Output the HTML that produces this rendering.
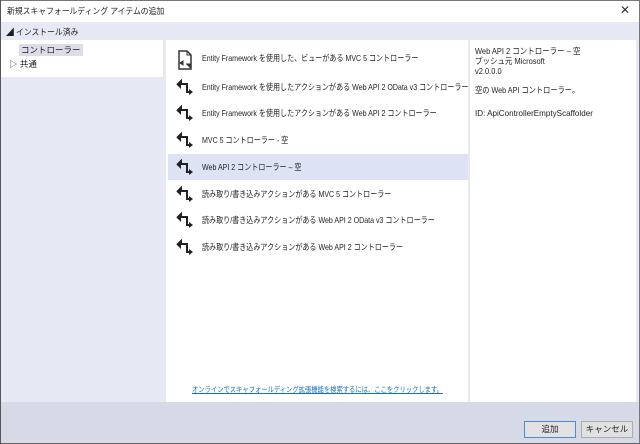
<!DOCTYPE html>
<html><head><meta charset="utf-8"><style>
*{margin:0;padding:0;box-sizing:border-box}
body{width:640px;height:444px;overflow:hidden;background:#e6e9f3;font-family:"Liberation Sans","Noto Sans CJK JP",sans-serif;font-size:9px;color:#1e1e1e;position:relative}
.abs{position:absolute}
.row{position:absolute;left:168px;width:300px;height:26px;display:flex;align-items:center;overflow:hidden}
.row span{position:absolute;left:34px;font-size:8.5px;white-space:nowrap;transform:scaleX(0.83);transform-origin:left center}
.row svg{position:absolute;left:8px;top:5px}
.sel{background:#dde2f4}
.btn{position:absolute;top:421px;height:17px;background:#e1e1e1;border:1px solid #adadad;font-size:8.5px;text-align:center;line-height:15px}
.sq{display:inline-block;white-space:nowrap;transform:scaleX(0.92);transform-origin:left top}
</style></head><body>
<div class="abs" style="left:0;top:0;width:640px;height:22px;background:#fff;border-left:1px solid #555;border-right:1px solid #777;border-top:1px solid #777"></div>
<div class="abs" style="left:7px;top:5px;font-size:8.5px"><span class="sq">新規スキャフォールディング アイテムの追加</span></div>
<div class="abs" style="left:620px;top:3px;font-size:12px;color:#333">✕</div>
<div class="abs" style="left:6px;top:26px;font-size:8.5px"><span class="sq">◢ インストール済み</span></div>
<div class="abs" style="left:0;top:40px;width:163px;height:37px;background:#fff"></div>
<div class="abs" style="left:19px;top:44px;background:#dcdcea;font-size:8.5px;padding:0 2px">コントローラー</div>
<div class="abs" style="left:9px;top:58px;font-size:8.5px">▷ 共通</div>
<div class="abs" style="left:166px;top:40px;width:302px;height:362px;background:#fff"></div>
<div class="abs" style="left:470px;top:40px;width:166px;height:362px;background:#fff"></div>
<div class="abs" style="left:0;top:402px;width:640px;height:42px;background:#d5dae6;border-bottom:1px solid #666"></div>
<div class="abs" style="left:0;top:0;width:1px;height:444px;background:#555"></div>
<div class="abs" style="left:639px;top:0;width:1px;height:444px;background:#777"></div>

<div class="row" style="top:45px"><svg width="18" height="20" viewBox="0 0 18 20"><path d="M3 1h8l4 4v14H3z" fill="#fff" stroke="#333" stroke-width="1.5"/><path d="M11 1v4h4" fill="none" stroke="#333"/><path d="M4 13l3-2v4zM10 14h4v4" fill="#333" stroke="#333"/></svg><span>Entity Framework を使用した、ビューがある MVC 5 コントローラー</span></div>
<div class="row" style="top:74px"><svg width="18" height="18" viewBox="0 0 18 18"><path d="M1 6l4-4v3h6v8h4" fill="none" stroke="#222" stroke-width="2"/><path d="M1 6l4 4V2z" fill="#222"/><path d="M13 10l4 3-4 3z" fill="#222"/></svg><span>Entity Framework を使用したアクションがある Web API 2 OData v3 コントローラー</span></div>
<div class="row" style="top:100px"><svg width="18" height="18" viewBox="0 0 18 18"><path d="M1 6l4-4v3h6v8h4" fill="none" stroke="#222" stroke-width="2"/><path d="M1 6l4 4V2z" fill="#222"/><path d="M13 10l4 3-4 3z" fill="#222"/></svg><span>Entity Framework を使用したアクションがある Web API 2 コントローラー</span></div>
<div class="row" style="top:127px"><svg width="18" height="18" viewBox="0 0 18 18"><path d="M1 6l4-4v3h6v8h4" fill="none" stroke="#222" stroke-width="2"/><path d="M1 6l4 4V2z" fill="#222"/><path d="M13 10l4 3-4 3z" fill="#222"/></svg><span>MVC 5 コントローラー - 空</span></div>
<div class="row sel" style="top:154px"><svg width="18" height="18" viewBox="0 0 18 18"><path d="M1 6l4-4v3h6v8h4" fill="none" stroke="#222" stroke-width="2"/><path d="M1 6l4 4V2z" fill="#222"/><path d="M13 10l4 3-4 3z" fill="#222"/></svg><span>Web API 2 コントローラー – 空</span></div>
<div class="row" style="top:181px"><svg width="18" height="18" viewBox="0 0 18 18"><path d="M1 6l4-4v3h6v8h4" fill="none" stroke="#222" stroke-width="2"/><path d="M1 6l4 4V2z" fill="#222"/><path d="M13 10l4 3-4 3z" fill="#222"/></svg><span>読み取り/書き込みアクションがある MVC 5 コントローラー</span></div>
<div class="row" style="top:207px"><svg width="18" height="18" viewBox="0 0 18 18"><path d="M1 6l4-4v3h6v8h4" fill="none" stroke="#222" stroke-width="2"/><path d="M1 6l4 4V2z" fill="#222"/><path d="M13 10l4 3-4 3z" fill="#222"/></svg><span>読み取り/書き込みアクションがある Web API 2 OData v3 コントローラー</span></div>
<div class="row" style="top:234px"><svg width="18" height="18" viewBox="0 0 18 18"><path d="M1 6l4-4v3h6v8h4" fill="none" stroke="#222" stroke-width="2"/><path d="M1 6l4 4V2z" fill="#222"/><path d="M13 10l4 3-4 3z" fill="#222"/></svg><span>読み取り/書き込みアクションがある Web API 2 コントローラー</span></div>

<div class="abs" style="left:192px;top:384px;font-size:7.5px;color:#1a6fb0;text-decoration:underline;white-space:nowrap;transform:scaleX(0.84);transform-origin:left top">オンラインでスキャフォールディング拡張機能を検索するには、ここをクリックします。</div>

<div class="abs" style="left:475px;top:46px;font-size:8.5px;line-height:10px;white-space:nowrap;transform:scaleX(0.88);transform-origin:left top">Web API 2 コントローラー – 空<br>プッシュ元 Microsoft<br>v2.0.0.0</div>
<div class="abs" style="left:475px;top:84px;font-size:8.5px;white-space:nowrap;transform:scaleX(0.85);transform-origin:left top">空の Web API コントローラー。</div>
<div class="abs" style="left:475px;top:108px;font-size:8.5px;white-space:nowrap;transform:scaleX(0.95);transform-origin:left top">ID: ApiControllerEmptyScaffolder</div>

<div class="btn" style="left:524px;width:52px;border-color:#4a8ed0">追加</div>
<div class="btn" style="left:581px;width:52px">キャンセル</div>
</body></html>
